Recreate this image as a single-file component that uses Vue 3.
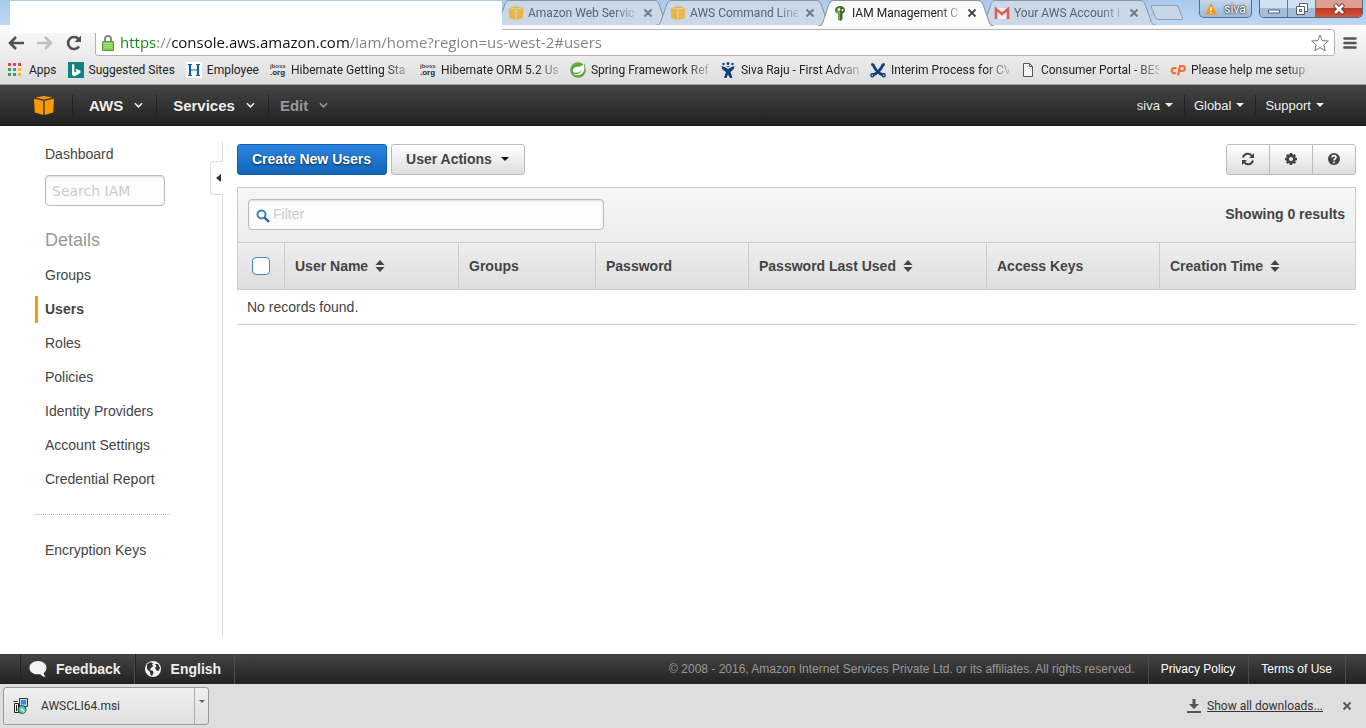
<template>
  <div class="browser">
    <svg class="sprite" aria-hidden="true">
      <symbol id="cube" viewBox="0 0 20 19">
        <path d="M10 0l8.500 1.600L10 3.400 1.500 1.600z M0 2.700l9.300 2.100V19L.8 16.500z M20 2.700l-9.300 2.100V19l8.500-2.500z" />
      </symbol>
      <symbol id="close" viewBox="0 0 10 10">
        <path d="M1.500 1.500l7 7M8.500 1.500l-7 7" fill="none" stroke="currentColor" stroke-width="1.800" />
      </symbol>
      <symbol id="key" viewBox="0 0 16 16">
        <path d="M8 1c3 0 5 1.700 5 4 0 1.800-1 3-2.500 3.400V14L8.500 16 6 14.500V12h1.500v-1H6V8.500C4 8 3 7 3 5c0-2.300 2-4 5-4z" fill="#3f6b2a" />
        <path d="M5 3.500L8 2v13l-2-1V8.500L4 7z" fill="#79a651" />
        <circle cx="7" cy="4.500" r="1.200" fill="#fff" /><circle cx="10.500" cy="5" r="1" fill="#fff" />
      </symbol>
      <symbol id="gmail" viewBox="0 0 16 16">
        <path d="M1 3h14v11H1z" fill="#f3efef" />
        <path d="M2 14V4l6 5 6-5v10" fill="none" stroke="#d9605a" stroke-width="2.600" />
      </symbol>
      <symbol id="apps" viewBox="0 0 16 16">
        <path d="M0 1h3v3H0z M5 1h3v3H5z M10 1h3v3h-3z" fill="#e8453c" />
        <path d="M0 6h3v3H0z" fill="#35a65a" /><path d="M5 6h3v3H5z" fill="#4688f1" /><path d="M10 6h3v3h-3z" fill="#f9bb2d" />
        <path d="M0 11h3v3H0z M5 11h3v3H5z" fill="#35a65a" /><path d="M10 11h3v3h-3z" fill="#f9bb2d" />
      </symbol>
      <symbol id="bing" viewBox="0 0 16 16">
        <path d="M0 0h16v16H0z" fill="#0c8484" />
        <path d="M4 2l2.300.8v7.700l2.200-1.200-1.100-2.500 5 1.800v2.500L6.300 14.500 4 13z" fill="#fff" />
      </symbol>
      <symbol id="employee" viewBox="0 0 16 16">
        <path d="M0 0h16v16H0z" fill="#fff" />
        <path d="M4 2.500v11M12 2.500v11" stroke="#0f5f98" stroke-width="2.200" />
        <path d="M4 8h8M2 2.500h4M10 2.500h4M2 13.500h4M10 13.500h4" stroke="#0f5f98" stroke-width="1.200" />
      </symbol>
      <symbol id="spring" viewBox="0 0 16 16">
        <circle cx="8" cy="8" r="7.800" fill="#62a744" />
        <path d="M14 2c1 5 0 10-5 11-2 .4-4 0-6-.2 5-.3 8-2 9.500-5-2 2-4 2.800-7 3-2 .2-3-1.500-2.500-3.300C4 3.500 11 6 14 2z" fill="#fff" />
        <path d="M14.500 1l.8 3-1.300.5z" fill="#62a744" />
      </symbol>
      <symbol id="jira" viewBox="0 0 16 16">
        <g fill="#123f75">
          <circle cx="3.500" cy="2" r="1.200" /><circle cx="8" cy="1.500" r="1.500" /><circle cx="12.500" cy="2" r="1.200" />
          <path d="M1.500 4l3 1 3.500 2 3.500-2 3-1-1 3.500-3 2.500.5 1.500 1.500 4.500h-2.500L8 12.500 6.500 16H4l1.500-4.500.5-1.500-3.500-2.500z" />
        </g>
        <path d="M5.500 4h5L8 5.800z" fill="#5d86b4" />
      </symbol>
      <symbol id="confluence" viewBox="0 0 16 16">
        <path d="M3 2.500c2 5 6 9 10 10.500M13 2.500C11 7.500 7 11.500 3 13" fill="none" stroke="#123f75" stroke-width="2.800" />
        <circle cx="2.300" cy="13.300" r="1.500" fill="none" stroke="#123f75" stroke-width="1.400" /><circle cx="13.700" cy="13.300" r="1.500" fill="none" stroke="#123f75" stroke-width="1.400" />
        <circle cx="2.500" cy="2.500" r="1.500" fill="#123f75" /><circle cx="13.500" cy="2.500" r="1.500" fill="#123f75" />
      </symbol>
      <symbol id="page" viewBox="0 0 16 16">
        <path d="M3.500 1.500h6l3 3v10h-9z M9.500 1.500v3h3" fill="#f6f6f6" stroke="#555" />
      </symbol>
      <symbol id="cpanel" viewBox="0 0 16 16">
        <path d="M6.500 6H4.300a2.600 2.600 0 0 0 0 5.200h1.500M8 13.500L10 4h2.300a2.500 2.500 0 0 1 0 5H10" fill="none" stroke="#ff6c2c" stroke-width="2.200" />
      </symbol>
    </svg>

    <!-- tab strip -->
    <div class="tab-strip">
      <div class="blank"></div>
      <div class="tabs">
        <div v-for="tab in tabs" :key="tab.title" :class="['tab', { active: tab.active }]">
          <svg class="tab-shape" viewBox="0 0 176 25" preserveAspectRatio="none" aria-hidden="true">
            <path d="M0 25C4 25 4 23 5 21L11 4C12 2 13 .5 16 .5H160C163 .5 164 2 165 4L171 21C172 23 172 25 176 25" />
          </svg>
          <svg :class="['tab-icon', tab.icon]" aria-hidden="true"><use :href="'#' + tab.icon" /></svg>
          <span class="tab-title fade">{{ tab.title }}</span>
          <button class="tab-close" aria-label="Close tab"><svg><use href="#close" /></svg></button>
        </div>
      </div>
      <button class="new-tab" aria-label="New tab"></button>
      <div class="window-controls">
        <button class="profile">
          <svg viewBox="0 0 12 12" aria-hidden="true"><path d="M6 0l6 11.500H0z" fill="#f39c12" /><path d="M6 4v4M6 9v1.300" stroke="#fff" stroke-width="1.300" /></svg>
          siva
        </button>
        <div class="frame-buttons">
          <button class="minimize" aria-label="Minimize"><svg viewBox="0 0 14 12"><path d="M1.500 7h11v3h-11z" fill="#fff" stroke="#56606c" /></svg></button>
          <button class="restore" aria-label="Restore"><svg viewBox="0 0 14 12"><path d="M4.500.5h8v8h-8z" fill="#fff" stroke="#56606c" /><path d="M1.500 3.500h8v8h-8z" fill="#fff" stroke="#56606c" /><path d="M4.500 6.500h2v2h-2z" fill="#b9cfe6" stroke="#56606c" /></svg></button>
          <button class="quit" aria-label="Close"><svg viewBox="0 0 14 12"><path d="M2.500 1.500l9 9M11.500 1.500l-9 9" stroke="#5b3535" stroke-width="4.500" /><path d="M3 2l8 8M11 2l-8 8" stroke="#fff" stroke-width="2.600" /></svg></button>
        </div>
      </div>
    </div>

    <!-- address bar and bookmarks -->
    <div class="chrome">
      <div class="toolbar">
        <button class="tool" aria-label="Back"><svg viewBox="0 0 16 16"><path d="M8 2L2 8l6 6M2 8h14" fill="none" stroke="#505050" stroke-width="2.600" /></svg></button>
        <button class="tool" aria-label="Forward"><svg viewBox="0 0 16 16"><path d="M8 2l6 6-6 6M14 8H0" fill="none" stroke="#c0c0c0" stroke-width="2.600" /></svg></button>
        <button class="tool" aria-label="Reload"><svg viewBox="0 0 16 16"><path d="M13 11.500A6 6 0 1 1 12.500 4" fill="none" stroke="#505050" stroke-width="2.600" /><path d="M15 .5V7H8.500z" fill="#505050" /></svg></button>
        <div class="omnibox">
          <svg class="lock" viewBox="0 0 12 16" aria-hidden="true">
            <path d="M3 7V4a3 3 0 0 1 6 0v3" fill="none" stroke="#888" stroke-width="2" />
            <path d="M.5 6.500h11v9H.5z" fill="#82cc5c" stroke="#549b35" /><path d="M2 8.500h8M2 10.500h8M2 12.500h8" stroke="#a4e07f" />
          </svg>
          <input class="url" type="text" aria-label="Address" v-model="url">
          <svg class="star" viewBox="0 0 18 18"><path d="M9 1l2.300 5.600 6 .4-4.600 3.900 1.500 5.900L9 13.500l-5.200 3.300 1.500-5.900L.7 7l6-.4z" fill="#fff" stroke="#777" /></svg>
        </div>
        <button class="menu" aria-label="Menu"><svg viewBox="0 0 14 14"><path d="M1.500 2.500h11M1.500 7h11M1.500 11.500h11" stroke="#555" stroke-width="2.600" stroke-linecap="round" /></svg></button>
      </div>
      <nav class="bookmarks">
        <a v-for="mark in bookmarks" :key="mark.label" href="#" :class="['bookmark', { long: mark.long }]">
          <svg v-if="mark.icon === 'jboss'" viewBox="0 0 16 16" aria-hidden="true">
            <text x="0" y="6" class="jboss-top">jboss</text>
            <text x="0" y="13" class="jboss-org">.org</text>
          </svg>
          <svg v-else aria-hidden="true"><use :href="'#' + mark.icon" /></svg>
          <span :class="{ fade: mark.long }">{{ mark.label }}</span>
        </a>
      </nav>
    </div>

    <!-- console navigation -->
    <header class="nav">
      <a href="#" class="logo" aria-label="Home"><svg><use href="#cube" /></svg></a>
      <button v-for="item in mainMenu" :key="item" :class="['nav-main', { dim: item === 'Edit' }]">
        {{ item }}
        <svg viewBox="0 0 10 6" aria-hidden="true"><path d="M1 1l4 4 4-4" fill="none" stroke="currentColor" stroke-width="1.800" /></svg>
      </button>
      <div class="nav-right">
        <button v-for="item in accountMenu" :key="item" class="nav-sub">{{ item }}<i class="caret"></i></button>
      </div>
    </header>

    <div class="page">
      <aside class="sidebar">
        <a href="#" class="side-link">Dashboard</a>
        <input class="search" type="text" placeholder="Search IAM" aria-label="Search IAM" v-model="search">
        <h2>Details</h2>
        <ul>
          <li v-for="link in links" :key="link">
            <a href="#" :class="['side-link', { current: link === current }]" @click.prevent="current = link">{{ link }}</a>
          </li>
        </ul>
        <hr>
        <a href="#" class="side-link">Encryption Keys</a>
        <button class="collapse" aria-label="Collapse sidebar"></button>
      </aside>

      <main class="content">
        <div class="actions">
          <button class="btn primary">Create New Users</button>
          <button class="btn">User Actions <i class="caret"></i></button>
          <div class="btn-group">
            <button class="btn" aria-label="Refresh"><svg viewBox="0 0 14 14"><path d="M2 5.500A5 5 0 0 1 11 4M12 8.500A5 5 0 0 1 3 10" fill="none" stroke="#444" stroke-width="2" /><path d="M13 1v5H8z M1 13V8h5z" fill="#444" /></svg></button>
            <button class="btn" aria-label="Settings"><svg viewBox="0 0 14 14"><circle cx="7" cy="7" r="3.500" fill="none" stroke="#444" stroke-width="2.800" /><path d="M7 1v2M7 11v2M1 7h2M11 7h2M2.800 2.800l1.400 1.400M9.800 9.800l1.400 1.400M2.800 11.200l1.400-1.400M9.800 4.200l1.400-1.400" stroke="#444" stroke-width="2.400" /></svg></button>
            <button class="btn" aria-label="Help"><svg viewBox="0 0 14 14"><circle cx="7" cy="7" r="6" fill="#444" /><path d="M5 5.500C5 3 9 3 9 5.300 9 6.800 7 6.800 7 8.500M7 9.500v1.700" fill="none" stroke="#fff" stroke-width="1.600" /></svg></button>
          </div>
        </div>

        <div class="filter-bar">
          <label class="filter">
            <svg viewBox="0 0 14 14" aria-hidden="true"><circle cx="5.500" cy="5.500" r="4" fill="none" stroke="#3c82bd" stroke-width="2" /><path d="M8.500 8.500l4.500 4.500" stroke="#34589b" stroke-width="2.400" /></svg>
            <input type="text" placeholder="Filter" aria-label="Filter" v-model="filter">
          </label>
          <span class="count">Showing 0 results</span>
        </div>
        <table>
          <colgroup>
            <col class="c-check"><col class="c-name"><col class="c-groups"><col class="c-password"><col class="c-used"><col class="c-keys"><col>
          </colgroup>
          <thead>
            <tr>
              <th class="check"><input type="checkbox" aria-label="Select all"></th>
              <th v-for="col in columns" :key="col.label">
                {{ col.label }}
                <svg v-if="col.sortable" class="sort" viewBox="0 0 10 12" aria-hidden="true"><path d="M5 0l4.500 5h-9z M5 12L.5 7h9z" fill="#444" /></svg>
              </th>
            </tr>
          </thead>
          <tbody>
            <tr><td colspan="7">No records found.</td></tr>
          </tbody>
        </table>
      </main>
    </div>

    <footer class="footer">
      <button class="foot-btn">
        <svg viewBox="0 0 18 16" aria-hidden="true"><path d="M9 0c5 0 8.500 3 8.500 6.700 0 2.300-1.200 4-2.800 5.200.2 1.800 1 3 2.300 3.900-2.600 0-4.500-1-5.700-2.600C4.500 14 .5 11 .5 6.700.5 3 4 0 9 0z" fill="#f3f3f3" /></svg>
        Feedback
      </button>
      <button class="foot-btn">
        <svg viewBox="0 0 16 16" aria-hidden="true"><circle cx="8" cy="8" r="8" fill="#f3f3f3" /><path d="M2 3.500l3-2.200 3 .7-1 2 1.500 1L6 7 5 9l3 1 .5 2L7 15l-1.500-1-.5-3-3-3zM10 3l3 0 2 4-1.500 3-2-.5L10 7l1.500-2z" fill="#333" /></svg>
        English
      </button>
      <span class="copyright">© 2008 - 2016, Amazon Internet Services Private Ltd. or its affiliates. All rights reserved.</span>
      <a href="#" class="foot-link">Privacy Policy</a>
      <a href="#" class="foot-link">Terms of Use</a>
    </footer>

    <div class="downloads">
      <div class="download">
        <button class="file">
          <svg viewBox="0 0 16 16" aria-hidden="true">
            <path d="M6.500.5h8v8h-8z" fill="#d6d6d6" stroke="#333" /><path d="M8 2h5v4.500H8z" fill="#2f8fe8" />
            <path d="M1.500 5.500h4v9h-4z" fill="#eee" stroke="#222" /><path d="M.5 3.500h4M3.500 7v6" stroke="#222" />
            <circle cx="9" cy="11.500" r="4" fill="#35d6c0" stroke="#222" stroke-width=".8" /><path d="M9 11.500l3.500 1.500-2 2z" fill="#f4e94a" /><circle cx="9" cy="11.500" r="1.200" fill="#fff" />
          </svg>
          AWSCLI64.msi
        </button>
        <button class="more" aria-label="Download options"><i class="caret"></i></button>
      </div>
      <a href="#" class="show-all">
        <svg viewBox="0 0 14 14" aria-hidden="true"><path d="M5.500 0h3v5H12L7 10 2 5h3.500z M0 12h14v2H0z" fill="#555" /></svg>
        <span>Show all downloads...</span>
      </a>
      <button class="dismiss" aria-label="Close downloads"><svg><use href="#close" /></svg></button>
    </div>
  </div>
</template>

<script setup>
import { ref } from 'vue'

const url = ref('https://console.aws.amazon.com/iam/home?region=us-west-2#users')
const search = ref('')
const filter = ref('')
const current = ref('Users')

const tabs = [
  { title: 'Amazon Web Servic', icon: 'cube' },
  { title: 'AWS Command Line', icon: 'cube' },
  { title: 'IAM Management C', icon: 'key', active: true },
  { title: 'Your AWS Account i', icon: 'gmail' }
]

const bookmarks = [
  { label: 'Apps', icon: 'apps' },
  { label: 'Suggested Sites', icon: 'bing' },
  { label: 'Employee', icon: 'employee' },
  { label: 'Hibernate Getting Sta', icon: 'jboss', long: true },
  { label: 'Hibernate ORM 5.2 Us', icon: 'jboss', long: true },
  { label: 'Spring Framework Ref', icon: 'spring', long: true },
  { label: 'Siva Raju - First Advan', icon: 'jira', long: true },
  { label: 'Interim Process for CV', icon: 'confluence', long: true },
  { label: 'Consumer Portal - BES', icon: 'page', long: true },
  { label: 'Please help me setup', icon: 'cpanel', long: true }
]

const mainMenu = ['AWS', 'Services', 'Edit']
const accountMenu = ['siva', 'Global', 'Support']
const links = ['Groups', 'Users', 'Roles', 'Policies', 'Identity Providers', 'Account Settings', 'Credential Report']

const columns = [
  { label: 'User Name', sortable: true },
  { label: 'Groups' },
  { label: 'Password' },
  { label: 'Password Last Used', sortable: true },
  { label: 'Access Keys' },
  { label: 'Creation Time', sortable: true }
]
</script>

<style>
body {
  background: #fff;
}
</style>

<style scoped>
* {
  box-sizing: border-box;
}
button {
  font: inherit;
  color: inherit;
  background: none;
  border: 0;
  padding: 0;
}
a {
  color: inherit;
  text-decoration: none;
}
svg {
  display: block;
  flex: none;
}
.sprite {
  position: absolute;
  width: 0;
  height: 0;
}
.browser {
  display: flex;
  flex-direction: column;
  min-height: 100vh;
  font: 14px "Liberation Sans", sans-serif;
  color: #444;
}
.fade {
  white-space: nowrap;
  mask-image: linear-gradient(to right, #000 80%, rgba(0, 0, 0, 0.2));
}
.caret {
  border: 4px solid transparent;
  border-top-color: currentColor;
  border-bottom: 0;
}

/* tab strip */
.tab-strip {
  display: flex;
  height: 25px;
  background: linear-gradient(#a9c9ec, #bdd7f3);
  font-family: Roboto, sans-serif;
  font-size: 12px;
}
.blank {
  flex: none;
  width: 492px;
  height: 32px;
  margin: 1px 0 0 10px;
  background: #fff;
  position: relative;
  z-index: 3;
}
.tabs {
  display: flex;
  margin-left: -8px;
}
.tab {
  position: relative;
  display: flex;
  align-items: center;
  width: 176px;
  height: 25px;
  padding-left: 14px;
  color: #59646f;
}
.tab + .tab {
  margin-left: -14px;
}
.tab.active {
  z-index: 2;
  height: 26px;
  color: #222;
}
.tab-shape {
  position: absolute;
  inset: 0;
  width: 100%;
  height: 100%;
  fill: #cad8e8;
  stroke: #8593a5;
}
.active .tab-shape {
  fill: #fbfbfb;
}
.tab-icon {
  position: relative;
  width: 16px;
  height: 14px;
  fill: #ecb644;
}
.tab-icon.key,
.tab-icon.gmail {
  height: 16px;
}
.tab-title {
  position: relative;
  width: 108px;
  margin: 0 7px 0 4px;
}
.tab-close {
  position: relative;
  color: #6d7681;
}
.tab-close svg,
.dismiss svg {
  width: 10px;
  height: 10px;
}
.active .tab-close {
  color: #444;
}
.new-tab {
  width: 28px;
  height: 15px;
  margin: 5px 0 0 -3px;
  border: 1px solid #8e9cae;
  border-radius: 3px;
  background: #c8d7e8;
  transform: skewX(22deg);
}
.window-controls {
  display: flex;
  gap: 7px;
  height: 18px;
  margin: 0 3px 0 auto;
}
.profile {
  display: flex;
  align-items: center;
  justify-content: center;
  gap: 7px;
  width: 53px;
  border: 1px solid #5b6f88;
  border-top: 0;
  border-radius: 0 0 5px 5px;
  background: linear-gradient(#c3d7ec, #9db8d4);
  color: #fff;
  text-shadow: 0 0 2px #222, 0 0 2px #222;
}
.profile svg {
  width: 12px;
  height: 12px;
}
.frame-buttons {
  display: flex;
  border: 1px solid #56667c;
  border-top: 0;
  border-radius: 0 0 5px 5px;
  overflow: hidden;
}
.frame-buttons button {
  display: grid;
  place-items: center;
  width: 28px;
  border-right: 1px solid #64788f;
  background: linear-gradient(#cfe0f2 45%, #a3bdd9 50%);
}
.frame-buttons svg {
  width: 14px;
  height: 12px;
}
.frame-buttons .quit {
  width: 46px;
  border: 0;
  background: linear-gradient(#dc9e92 45%, #c1361f 50%, #cf5a40);
}

/* address bar and bookmarks */
.chrome {
  border-bottom: 1px solid #a3a3a3;
  background: linear-gradient(#fbfbfb, #dedede);
}
.toolbar {
  display: flex;
  align-items: center;
  padding: 4px 9px 0 8px;
}
.tool {
  width: 29px;
}
.tool svg {
  width: 16px;
  height: 16px;
}
.omnibox {
  display: flex;
  flex: 1;
  align-items: center;
  height: 27px;
  padding: 0 5px 0 6px;
  border: 1px solid #b3b3b3;
  border-radius: 3px;
  background: #fff;
}
.lock {
  width: 12px;
  height: 16px;
}
.url {
  flex: 1;
  min-width: 0;
  margin-left: 6px;
  padding: 0 0 2px;
  border: 0;
  outline: 0;
  font: 15px "Open Sans", sans-serif;
  color: transparent;
  background: linear-gradient(to right, #0b8a0b 36px, #888 36px 51px, #111 51px 229px, #808080 229px);
  background-clip: text;
}
.star {
  width: 18px;
  height: 18px;
}
.menu {
  margin-left: 8px;
}
.menu svg {
  width: 14px;
  height: 14px;
}
.bookmarks {
  display: flex;
  gap: 11px;
  height: 28px;
  padding: 0 8px;
  font-family: Roboto, sans-serif;
  font-size: 12px;
  color: #222;
}
.bookmark {
  display: flex;
  flex: none;
  align-items: center;
  gap: 5px;
  white-space: nowrap;
}
.bookmark svg {
  width: 16px;
  height: 16px;
}
.long span {
  width: 118px;
}
.jboss-top {
  font: bold 6px "Liberation Sans", sans-serif;
  fill: #444;
}
.jboss-org {
  font: bold 8px "Liberation Sans", sans-serif;
  fill: #1d2b3c;
}

/* console navigation */
.nav {
  display: flex;
  align-items: center;
  height: 41px;
  padding: 0 32px 0 34px;
  border-bottom: 1px solid #151515;
  background: linear-gradient(#444, #222);
  color: #eee;
}
.logo {
  margin-right: 18px;
}
.logo svg {
  width: 20px;
  height: 19px;
  fill: #ff9900;
}
.nav-main {
  display: flex;
  align-items: center;
  gap: 11px;
  height: 20px;
  padding: 0 13px 0 16px;
  border-left: 1px solid #222;
  font-size: 15px;
  font-weight: bold;
}
.nav-main svg {
  width: 9px;
  height: 6px;
}
.nav-main.dim {
  padding-left: 11px;
  color: #999;
}
.nav-right {
  display: flex;
  margin-left: auto;
}
.nav-sub {
  display: flex;
  align-items: center;
  gap: 5px;
  height: 20px;
  padding: 0 11px 0 9px;
  border-left: 1px solid #222;
  font-size: 13px;
}
.nav-sub:first-child {
  border: 0;
}
.nav-sub:last-child {
  padding-right: 10px;
}

/* sidebar */
.page {
  display: flex;
  flex: 1;
  gap: 14px;
  padding: 15px 10px 18px 35px;
}
.sidebar {
  position: relative;
  flex: none;
  width: 188px;
  border-right: 1px solid #ddd;
}
.sidebar ul {
  display: grid;
  gap: 7px;
  margin: 0;
  padding: 0;
  list-style: none;
}
.side-link {
  display: block;
  padding-left: 10px;
  line-height: 27px;
}
.side-link.current {
  padding-left: 7px;
  border-left: 3px solid #f90;
  font-weight: bold;
}
.search {
  display: block;
  width: 120px;
  height: 31px;
  margin: 7px 0 21px 10px;
  padding: 0 6px;
  border: 1px solid #bbb;
  border-radius: 4px;
  background: #fcfcfc;
  box-shadow: inset 0 1px 2px #ddd;
  font: 14px "DejaVu Sans", sans-serif;
}
input::placeholder {
  color: #ccc;
}
.sidebar h2 {
  margin: 0 0 8px 10px;
  font-size: 18px;
  font-weight: normal;
  line-height: 27px;
  color: #999;
}
.sidebar hr {
  width: 135px;
  margin: 21px 0 22px;
  border: 0;
  border-top: 1px dotted #bbb;
}
.collapse {
  position: absolute;
  top: 20px;
  right: -1px;
  display: grid;
  place-items: center end;
  width: 13px;
  height: 34px;
  padding-right: 2px;
  border: 1px solid #ddd;
  border-right: 0;
  border-radius: 4px 0 0 4px;
  background: #fff;
}
.collapse::before {
  content: "";
  border: 4px solid transparent;
  border-right: 5px solid #333;
  border-left: 0;
}

/* users list */
.content {
  flex: 1;
  min-width: 0;
  padding-top: 3px;
}
.actions {
  display: flex;
  gap: 4px;
  margin-bottom: 12px;
}
.btn {
  display: flex;
  align-items: center;
  gap: 9px;
  height: 31px;
  padding: 0 15px 2px 14px;
  border: 1px solid #bbb;
  border-radius: 3px;
  background: linear-gradient(#fff, #ddd);
  font-weight: bold;
}
.btn .caret {
  color: #111;
}
.btn.primary {
  border-color: #0e5fb0;
  background: linear-gradient(#2e85de, #1166bb);
  color: #fff;
  text-shadow: 0 1px 2px #024;
}
.btn-group {
  display: flex;
  margin-left: auto;
}
.btn-group .btn {
  justify-content: center;
  width: 44px;
  padding: 0 0 2px;
  border-radius: 0;
}
.btn-group .btn + .btn {
  margin-left: -1px;
}
.btn-group .btn:first-child {
  border-radius: 3px 0 0 3px;
}
.btn-group .btn:last-child {
  border-radius: 0 3px 3px 0;
}
.btn-group svg {
  width: 14px;
  height: 14px;
}
.filter-bar {
  display: flex;
  justify-content: space-between;
  height: 55px;
  padding: 11px 10px 0;
  border: 1px solid #ccc;
  border-bottom: 0;
  background: linear-gradient(#f6f6f6, #ececec);
}
.filter {
  display: flex;
  align-items: center;
  gap: 3px;
  width: 356px;
  height: 31px;
  padding: 0 7px;
  border: 1px solid #bbb;
  border-radius: 4px;
  background: #fcfcfc;
  box-shadow: inset 0 1px 2px #ddd;
}
.filter svg {
  width: 14px;
  height: 14px;
  margin-top: 2px;
}
.filter input {
  flex: 1;
  min-width: 0;
  padding: 0 0 2px;
  border: 0;
  outline: 0;
  background: none;
  font: inherit;
}
.count {
  font-weight: bold;
  line-height: 31px;
}
table {
  width: 100%;
  table-layout: fixed;
  border-collapse: separate;
  border-spacing: 0;
}
.c-check {
  width: 48px;
}
.c-name {
  width: 174px;
}
.c-groups {
  width: 137px;
}
.c-password {
  width: 153px;
}
.c-used {
  width: 238px;
}
.c-keys {
  width: 173px;
}
th {
  height: 48px;
  padding: 0 10px;
  border: 1px solid #ccc;
  border-left: 0;
  background: linear-gradient(#eee, #dedede);
  text-align: left;
  white-space: nowrap;
}
th.check {
  padding: 0 14px;
  border-left: 1px solid #ccc;
}
.check input {
  display: block;
  appearance: none;
  width: 18px;
  height: 18px;
  margin: 0;
  border: 1px solid #3a87d8;
  border-radius: 4px;
  background: #fff;
}
.sort {
  display: inline-block;
  width: 10px;
  height: 12px;
  margin-left: 3px;
  vertical-align: -1px;
}
td {
  height: 35px;
  padding: 0 10px;
  border-bottom: 1px solid #ccc;
}

/* footer */
.footer {
  display: flex;
  height: 30px;
  padding: 0 20px;
  background: linear-gradient(#444, #222);
  color: #eee;
}
.foot-btn {
  display: flex;
  align-items: center;
  gap: 9px;
  padding: 0 13px 0 8px;
  border-left: 1px solid #222;
  border-right: 1px solid #4a4a4a;
  font-weight: bold;
}
.foot-btn svg {
  width: 18px;
  height: 16px;
}
.copyright,
.foot-link {
  font-size: 12px;
  line-height: 30px;
}
.copyright {
  margin-left: auto;
  padding-right: 13px;
  color: #999;
}
.foot-link {
  padding: 0 13px 0 12px;
  border-left: 1px solid #4a4a4a;
  color: #fff;
}
.foot-link:last-child {
  border-right: 1px solid #4a4a4a;
}

/* downloads */
.downloads {
  display: flex;
  align-items: center;
  height: 44px;
  padding: 0 14px 0 3px;
  background: #dedede;
  font-family: Roboto, sans-serif;
  font-size: 12px;
  color: #333;
}
.download {
  display: flex;
  width: 206px;
  height: 38px;
  border: 1px solid #999;
  border-radius: 3px;
  background: linear-gradient(#f0f0f0, #e0e0e0);
}
.file {
  display: flex;
  flex: 1;
  align-items: center;
  gap: 12px;
  padding-left: 9px;
}
.file svg {
  width: 16px;
  height: 16px;
}
.more {
  display: grid;
  justify-items: center;
  width: 14px;
  padding-top: 12px;
  align-items: start;
  border-left: 1px solid #aaa;
  color: #666;
}
.more .caret {
  border-width: 3px 3px 0;
}
.show-all {
  display: flex;
  align-items: center;
  gap: 6px;
  margin-left: auto;
}
.show-all svg {
  width: 14px;
  height: 14px;
}
.show-all span {
  text-decoration: underline;
}
.dismiss {
  margin-left: 19px;
  color: #555;
}
</style>
